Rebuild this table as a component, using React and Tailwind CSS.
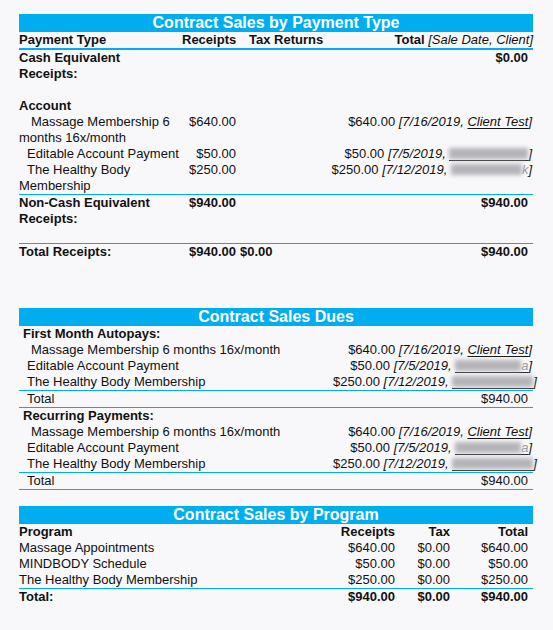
import React from "react";

const BAR = "h-[18px] bg-[#00aeef] text-white font-bold text-[16px] leading-[18px] text-center";

function Blurred({ w, tail, underline = true }) {
  return (
    <span className={`inline-block whitespace-nowrap ${underline ? "border-b border-[#222]" : ""} leading-[13px]`}>
      <span className={`inline-block ${w} h-[11px] bg-[#b3b3b8] blur-[2px] align-[-1px]`} />
      {tail ? <span className="text-[#9a9aa0]">{tail}</span> : null}
    </span>
  );
}

function Ref({ date, children }) {
  return (
    <span className="italic">
      [{date}, {children}]
    </span>
  );
}

function Link({ children }) {
  return <span className="underline underline-offset-[2px]">{children}</span>;
}

const G1 = "grid grid-cols-[163px_54px_90px_207px]";
const G2 = "grid grid-cols-[314px_200px]";
const G3 = "grid grid-cols-[316px_60px_55px_83px]";

function PaymentType() {
  return (
    <section className="w-[514px]">
      <div className={BAR}>Contract Sales by Payment Type</div>
      <div className={`${G1} font-bold border-b-2 border-[#00aeef]`}>
        <div>Payment Type</div>
        <div className="text-right">Receipts</div>
        <div className="pl-[13px]">Tax Returns</div>
        <div className="text-right whitespace-nowrap">
          Total <span className="italic font-normal">[Sale Date, Client]</span>
        </div>
      </div>
      <div className={`${G1} pb-[16px]`}>
        <div className="font-bold">
          Cash Equivalent
          <br />
          Receipts:
        </div>
        <div />
        <div />
        <div className="text-right font-bold pr-[5px]">$0.00</div>
      </div>
      <div className={G1}>
        <div className="font-bold">Account</div>
      </div>
      <div className={G1}>
        <div className="whitespace-nowrap">
          <span className="pl-[12px]">Massage Membership 6</span>
          <br />
          months 16x/month
        </div>
        <div className="text-right">$640.00</div>
        <div />
        <div className="text-right whitespace-nowrap pr-[1px]">
          $640.00 <Ref date="7/16/2019"><Link>Client Test</Link></Ref>
        </div>
      </div>
      <div className={G1}>
        <div className="whitespace-nowrap pl-[8px]">Editable Account Payment</div>
        <div className="text-right">$50.00</div>
        <div />
        <div className="text-right whitespace-nowrap pr-[1px]">
          $50.00 <Ref date="7/5/2019"><Blurred w="w-[79px]" /></Ref>
        </div>
      </div>
      <div className={`${G1} border-b border-[#00aeef]`}>
        <div className="whitespace-nowrap">
          <span className="pl-[8px]">The Healthy Body</span>
          <br />
          Membership
        </div>
        <div className="text-right">$250.00</div>
        <div />
        <div className="text-right whitespace-nowrap pr-[1px]">
          $250.00 <Ref date="7/12/2019"><Blurred w="w-[71px]" tail="k" underline={false} /></Ref>
        </div>
      </div>
      <div className={`${G1} pb-[16px] border-b border-[#00aeef] font-bold`}>
        <div>
          Non-Cash Equivalent
          <br />
          Receipts:
        </div>
        <div className="text-right">$940.00</div>
        <div />
        <div className="text-right pr-[5px]">$940.00</div>
      </div>
      <div className={`${G1} font-bold`}>
        <div>Total Receipts:</div>
        <div className="text-right">$940.00</div>
        <div className="pl-[4px]">$0.00</div>
        <div className="text-right pr-[5px]">$940.00</div>
      </div>
    </section>
  );
}

function DuesGroup({ title, healthyTail }) {
  return (
    <>
      <div className={G2}>
        <div className="font-bold pl-[4px]">{title}</div>
      </div>
      <div className={G2}>
        <div className="pl-[12px] whitespace-nowrap">Massage Membership 6 months 16x/month</div>
        <div className="text-right whitespace-nowrap pr-[1px]">
          $640.00 <Ref date="7/16/2019"><Link>Client Test</Link></Ref>
        </div>
      </div>
      <div className={G2}>
        <div className="pl-[8px] whitespace-nowrap">Editable Account Payment</div>
        <div className="text-right whitespace-nowrap pr-[1px]">
          $50.00 <Ref date="7/5/2019"><Blurred w="w-[66px]" tail="a" /></Ref>
        </div>
      </div>
      <div className={`${G2} border-b border-[#00aeef]`}>
        <div className="pl-[8px] whitespace-nowrap">The Healthy Body Membership</div>
        <div className="text-right whitespace-nowrap pr-[1px]">
          $250.00 <Ref date="7/12/2019"><Blurred w="w-[81px]" tail={healthyTail} /></Ref>
        </div>
      </div>
      <div className={`${G2} border-b border-[#00aeef]`}>
        <div className="pl-[8px]">Total</div>
        <div className="text-right pr-[5px]">$940.00</div>
      </div>
    </>
  );
}

function Dues() {
  return (
    <section className="w-[514px] mt-[48px]">
      <div className={BAR}>Contract Sales Dues</div>
      <DuesGroup title="First Month Autopays:" />
      <DuesGroup title="Recurring Payments:" />
    </section>
  );
}

function Program() {
  const rows = [
    ["Massage Appointments", "$640.00", "$0.00", "$640.00"],
    ["MINDBODY Schedule", "$50.00", "$0.00", "$50.00"],
    ["The Healthy Body Membership", "$250.00", "$0.00", "$250.00"],
  ];
  return (
    <section className="w-[514px] mt-[16px]">
      <div className={BAR}>Contract Sales by Program</div>
      <div className={`${G3} font-bold`}>
        <div>Program</div>
        <div className="text-right">Receipts</div>
        <div className="text-right">Tax</div>
        <div className="text-right pr-[5px]">Total</div>
      </div>
      {rows.map((r, i) => (
        <div key={r[0]} className={`${G3} ${i === rows.length - 1 ? "border-b border-[#00aeef]" : ""}`}>
          <div className="whitespace-nowrap">{r[0]}</div>
          <div className="text-right">{r[1]}</div>
          <div className="text-right">{r[2]}</div>
          <div className="text-right pr-[5px]">{r[3]}</div>
        </div>
      ))}
      <div className={`${G3} font-bold`}>
        <div>Total:</div>
        <div className="text-right">$940.00</div>
        <div className="text-right">$0.00</div>
        <div className="text-right pr-[5px]">$940.00</div>
      </div>
    </section>
  );
}

export default function App() {
  return (
    <div className="min-h-[630px] bg-[#f8f8fa] pt-[14px] px-[19px] font-['Liberation_Sans',Arial,sans-serif] text-[13px] leading-[16px] text-[#111]">
      <PaymentType />
      <Dues />
      <Program />
    </div>
  );
}
